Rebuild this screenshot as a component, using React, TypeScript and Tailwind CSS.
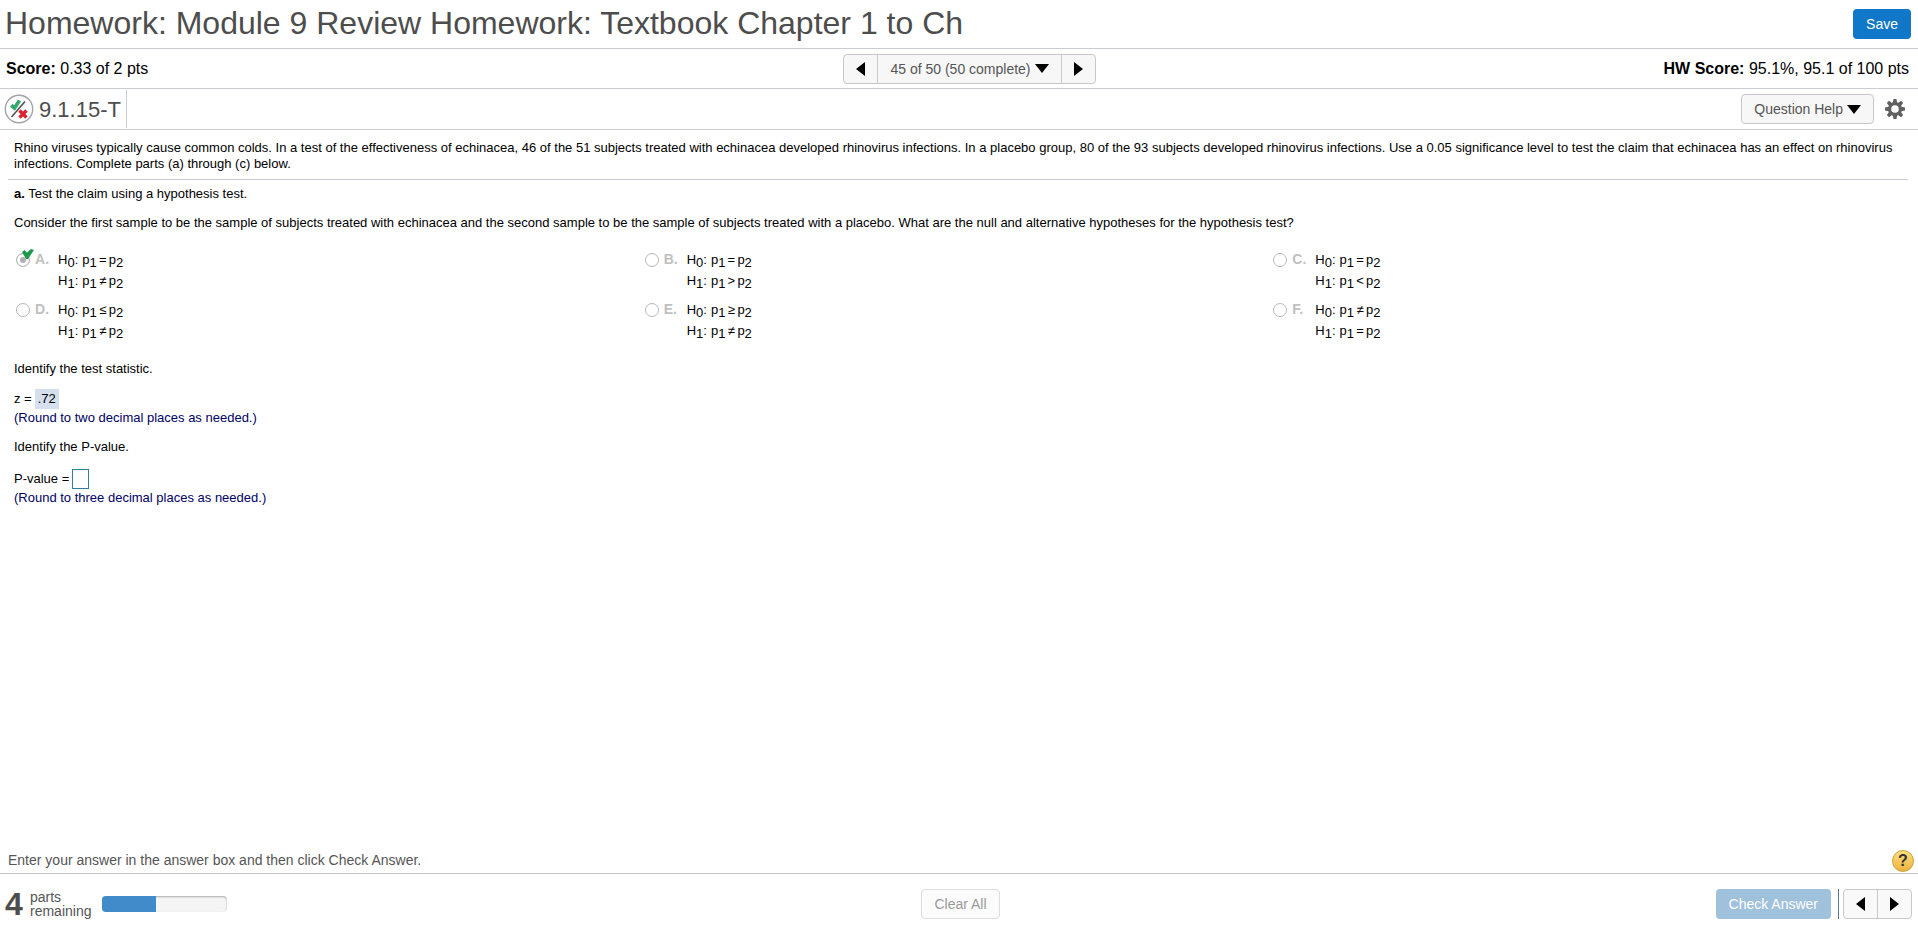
type Hypothesis = {
  letter: string;
  h0: string;
  h1: string;
  picked?: boolean;
};

const hypotheses: Hypothesis[] = [
  { letter: "A", h0: "=", h1: "≠", picked: true },
  { letter: "B", h0: "=", h1: ">" },
  { letter: "C", h0: "=", h1: "<" },
  { letter: "D", h0: "≤", h1: "≠" },
  { letter: "E", h0: "≥", h1: "≠" },
  { letter: "F", h0: "≠", h1: "=" },
];

const progress = { done: 3, total: 7 };

const TriangleLeft = () => (
  <svg width="9" height="14" viewBox="0 0 9 14" aria-hidden="true">
    <path d="M9 0v14L0 7z" fill="#000" />
  </svg>
);

const TriangleRight = () => (
  <svg width="9" height="14" viewBox="0 0 9 14" aria-hidden="true">
    <path d="M0 0v14l9-7z" fill="#000" />
  </svg>
);

const TriangleDown = () => (
  <svg width="14" height="9" viewBox="0 0 14 9" aria-hidden="true">
    <path d="M0 0h14L7 9z" fill="#000" />
  </svg>
);

const PartialCreditIcon = () => (
  <svg width="30" height="30" viewBox="0 0 30 30" aria-hidden="true">
    <circle cx="15" cy="15" r="13.7" fill="#fff" stroke="#a3a3a8" strokeWidth="1.4" />
    <path d="M7.200 11.200l3.300 2.800 5-7.500" fill="none" stroke="#35a96b" strokeWidth="3.8" />
    <path d="M7.500 23L21 7.500" stroke="#4a4a4a" strokeWidth="1.5" />
    <path d="M15.500 16.500l7 7M22.500 16.500l-7 7" stroke="#dc2430" strokeWidth="3.4" />
  </svg>
);

const GearIcon = () => (
  <svg width="20" height="20" viewBox="0 0 20 20" aria-hidden="true">
    <g fill="#606060">
      <path d="M8.500 0h3l.7 4H7.800zM8.500 20h3l.7-4H7.800z" />
      <path d="M8.500 0h3l.7 4H7.800zM8.500 20h3l.7-4H7.800z" transform="rotate(45 10 10)" />
      <path d="M8.500 0h3l.7 4H7.800zM8.500 20h3l.7-4H7.800z" transform="rotate(90 10 10)" />
      <path d="M8.500 0h3l.7 4H7.800zM8.500 20h3l.7-4H7.800z" transform="rotate(135 10 10)" />
      <circle cx="10" cy="10" r="7" />
    </g>
    <circle cx="10" cy="10" r="3.8" fill="#fff" />
  </svg>
);

const Statement = ({ index, sign }: { index: number; sign: string }) => (
  <span className="flex h-[21px] items-baseline text-[13px] leading-[21px]">
    <span>H</span>
    <span className="relative top-[3px]">{index}</span>
    <span>:</span>
    <span className="ml-1">p</span>
    <span className="relative top-[3px]">1</span>
    <span className="w-3 text-center">{sign}</span>
    <span>p</span>
    <span className="relative top-[3px]">2</span>
  </span>
);

const Choice = ({ letter, h0, h1, picked }: Hypothesis) => (
  <label className="flex items-start text-sm">
    <span className="relative mt-1 mr-[5px] size-[14px]">
      <input
        type="radio"
        name="hypothesis"
        defaultChecked={picked}
        disabled
        className="block size-[14px] appearance-none rounded-full border border-[#b8b8b8] bg-white checked:bg-[#b0b0b0] checked:shadow-[inset_0_0_0_3px_#fff]"
      />
      {picked ? (
        <svg
          className="absolute -top-1 left-1.5"
          width="12"
          height="11"
          viewBox="0 0 12 11"
          aria-hidden="true"
        >
          <path d="M0 3l2.500-2 2.500 2.500L9 0l3 1L6 10H4z" fill="#1c9a4c" />
        </svg>
      ) : (
        <></>
      )}
    </span>
    <span className="w-[23px] leading-[21px] font-bold text-[#c0c0c0]">{letter}.</span>
    <span className="flex flex-col">
      <Statement index={0} sign={h0} />
      <Statement index={1} sign={h1} />
    </span>
  </label>
);

const Header = () => (
  <header className="text-[#4d4d4d]">
    <div className="flex h-[49px] items-center justify-between border-b border-[#c9ccd4] pr-[7px] pl-[5px]">
      <h1 className="pb-0.5 text-[32px] leading-10">
        Homework: Module 9 Review Homework: Textbook Chapter 1 to Ch
      </h1>
      <button className="h-[30px] rounded-sm bg-[#1177c8] px-[13px] text-sm text-white">Save</button>
    </div>
    <div className="grid h-10 grid-cols-[1fr_auto_1fr] items-center border-b border-[#c9ccd4] pr-[9px] pl-1.5 text-base text-black">
      <p>
        <b>Score:</b> 0.33 of 2 pts
      </p>
      <nav
        className="ml-6 flex h-[30px] rounded-sm border border-[#c8c8c8] bg-[#f7f7f7] text-sm text-[#555]"
        aria-label="Questions"
      >
        <button className="flex w-[33px] items-center justify-center" aria-label="Previous question">
          <TriangleLeft />
        </button>
        <button className="flex items-center gap-1 border-x border-[#c8c8c8] px-3">
          45 of 50 (50 complete)
          <TriangleDown />
        </button>
        <button className="flex w-[33px] items-center justify-center" aria-label="Next question">
          <TriangleRight />
        </button>
      </nav>
      <p className="text-right">
        <b>HW Score:</b> 95.1%, 95.1 of 100 pts
      </p>
    </div>
    <div className="flex h-[41px] items-center justify-between border-b border-[#c9ccd4] pr-[13px] pl-1">
      <div className="flex h-[38px] items-center gap-[5px] border-r border-[#c9ccd4] pr-[5px]">
        <PartialCreditIcon />
        <h2 className="text-[22px]">9.1.15-T</h2>
      </div>
      <div className="flex items-center gap-[11px]">
        <button className="flex h-[30px] items-center gap-1 rounded-sm border border-[#c8c8c8] bg-[#f7f7f7] px-3 text-sm text-[#555]">
          Question Help
          <TriangleDown />
        </button>
        <button aria-label="Settings">
          <GearIcon />
        </button>
      </div>
    </div>
  </header>
);

const Question = () => (
  <main className="flex-1 pt-2.5 pr-2.5 pl-2 text-[13px] leading-4 text-black">
    <p className="border-b border-[#c9ccd4] px-1.5 pb-[7px]">
      Rhino viruses typically cause common colds. In a test of the effectiveness of echinacea, 46 of
      the 51 subjects treated with echinacea developed rhinovirus infections. In a placebo group, 80
      of the 93 subjects developed rhinovirus infections. Use a 0.05 significance level to test the
      claim that echinacea has an effect on rhinovirus infections. Complete parts (a) through (c)
      below.
    </p>
    <div className="px-1.5 pt-1.5">
      <p>
        <b>a.</b> Test the claim using a hypothesis test.
      </p>
      <p className="mt-[13px]">
        Consider the first sample to be the sample of subjects treated with echinacea and the second
        sample to be the sample of subjects treated with a placebo. What are the null and
        alternative hypotheses for the hypothesis test?
      </p>
      <fieldset className="mt-[18px] grid grid-cols-3 gap-y-2 pl-0.5">
        {hypotheses.map((hypothesis) => (
          <Choice key={hypothesis.letter} {...hypothesis} />
        ))}
      </fieldset>
      <p className="mt-5">Identify the test statistic.</p>
      <p className="mt-3 flex h-5 items-center gap-[3px]">
        z = <span className="bg-[#d5dfee] px-[3px] leading-5">.72</span>
      </p>
      <p className="mt-px text-[#000066]">(Round to two decimal places as needed.)</p>
      <p className="mt-[13px]">Identify the P-value.</p>
      <div className="mt-[14px] flex h-5 items-center gap-[3px]">
        <label htmlFor="p-value">P-value =</label>
        <input id="p-value" type="text" className="h-5 w-[17px] border border-[#2e7f98] px-0.5" />
      </div>
      <p className="mt-px text-[#000066]">(Round to three decimal places as needed.)</p>
    </div>
  </main>
);

const Footer = () => (
  <footer className="text-sm text-[#555]">
    <div className="flex h-[26px] items-center justify-between border-b border-[#c4c4c8] pr-1 pl-2">
      <p className="pb-0.5">Enter your answer in the answer box and then click Check Answer.</p>
      <button
        className="size-[22px] rounded-full border border-[#c9a13e] bg-linear-to-b from-[#fce07c] to-[#eeb23c] text-base leading-5 font-bold text-[#333]"
        aria-label="Help"
      >
        ?
      </button>
    </div>
    <div className="grid h-[59px] grid-cols-[1fr_auto_1fr] items-center pr-1.5 pl-[5px]">
      <div className="flex items-center">
        <span className="w-[25px] text-[32px] leading-8 font-bold text-[#4d4d4d]">4</span>
        <span className="w-[72px] leading-[14px]">
          parts
          <br />
          remaining
        </span>
        <div
          className="h-4 w-[125px] overflow-hidden rounded-sm bg-[#f5f5f5] shadow-[inset_0_1px_2px_#aaa]"
          role="progressbar"
          aria-valuenow={progress.done}
          aria-valuemax={progress.total}
          aria-label="Parts completed"
        >
          <div
            className="h-full bg-[#428bca]"
            style={{ width: `${(progress.done / progress.total) * 100}%` }}
          />
        </div>
      </div>
      <button
        className="ml-1 h-[30px] rounded-sm border border-[#ddd] bg-[#fcfcfc] px-3 text-[#999]"
        disabled
      >
        Clear All
      </button>
      <div className="flex items-center justify-end">
        <button className="h-[30px] rounded-sm bg-[#9fc1dc] px-[13px] text-white" disabled>
          Check Answer
        </button>
        <div className="ml-[7px] h-[30px] border-l border-[#5f7890]" />
        <div className="ml-1 flex h-[30px] rounded-sm border border-[#c8c8c8] bg-[#f9f9f9]">
          <button className="flex w-[33px] items-center justify-center" aria-label="Previous">
            <TriangleLeft />
          </button>
          <button
            className="flex w-[34px] items-center justify-center border-l border-[#c8c8c8]"
            aria-label="Next"
          >
            <TriangleRight />
          </button>
        </div>
      </div>
    </div>
  </footer>
);

export default function App() {
  return (
    <div className="flex min-h-screen flex-col bg-white font-['Liberation_Sans',Arial,sans-serif]">
      <Header />
      <Question />
      <Footer />
    </div>
  );
}
